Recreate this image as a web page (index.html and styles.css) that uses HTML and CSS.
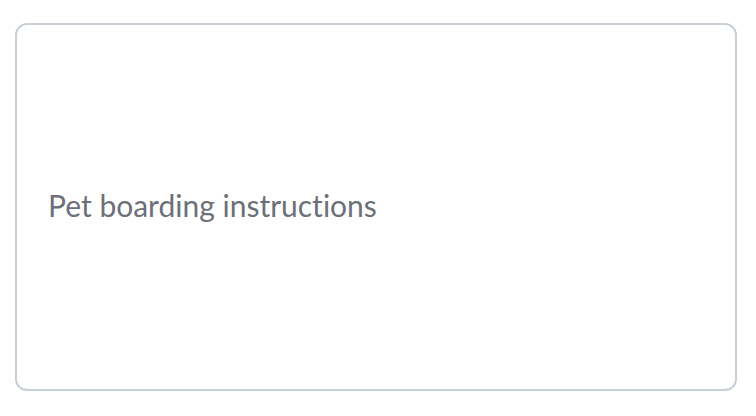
FILE: index.html
```html
<!DOCTYPE html>
<html lang="en">

<head>
    <meta charset="UTF-8">
    <meta name="viewport" content="width=device-width, initial-scale=1.0">
    <title>Pet boarding instructions</title>

    <link rel="stylesheet" href="styles.css">
</head>

<body>
    <div class="card">
        <p class="label">Pet boarding instructions</p>
    </div>
</body>

</html>
```

FILE: styles.css
```css
html {
font-family: Lato, sans-serif;
}

body {
margin: 0;
padding: 23px 0 0 15px;
background-color: #fff;
}

.card {
box-sizing: border-box;
width: 722px;
height: 368px;
border: 2px solid #c8cfd8;
border-radius: 12px;
display: flex;
align-items: center;
padding-left: 31px;
padding-bottom: 4px;
}

.label {
margin: 0;
font-size: 30px;
font-variant-ligatures: none;
color: #6b7079;
}
```
